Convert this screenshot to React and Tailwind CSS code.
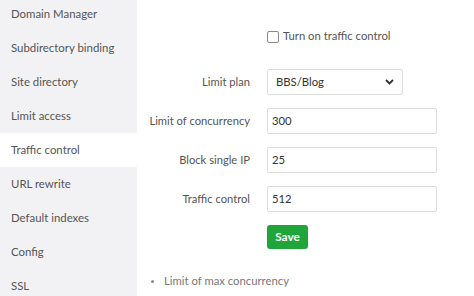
import React from "react";

const items = [
  "Domain Manager",
  "Subdirectory binding",
  "Site directory",
  "Limit access",
  "Traffic control",
  "URL rewrite",
  "Default indexes",
  "Config",
  "SSL",
];

function Row({ label, children }) {
  return (
    <div className="flex items-center h-[26px]">
      <div className="w-[130px] shrink-0 pr-[17px] text-right text-[11.2px] text-[#555] whitespace-nowrap">{label}</div>
      {children}
    </div>
  );
}

export default function App() {
  return (
    <div
      className="flex w-[474px] h-[296px] overflow-hidden bg-white"
      style={{ fontFamily: 'Lato, "Noto Sans", sans-serif' }}
    >
      <div className="w-[137px] shrink-0 bg-[#f2f2f4] -mt-[3px] flex flex-col">
        {items.map((t) => (
          <div
            key={t}
            className={
              "h-[34px] shrink-0 flex items-center pl-[11px] text-[11.4px] text-[#555] " +
              (t === "Traffic control" ? "bg-white" : "")
            }
          >
            {t}
          </div>
        ))}
      </div>
      <div className="flex-1 flex flex-col pt-[30px]">
        <div className="flex items-center h-[13px] pl-[130px]">
          <span className="w-[12px] h-[12px] border border-[#888] rounded-[2px] bg-white mr-[4px]" />
          <span className="text-[11.3px] text-[#555]">Turn on traffic control</span>
        </div>
        <div className="flex flex-col gap-[13px] mt-[26px]">
          <Row label="Limit plan">
            <div className="w-[136px] h-[26px] border border-[#ddd] rounded-[2px] flex items-center justify-between px-[8px] text-[11.3px] text-[#333]">
              <span>BBS/Blog</span>
              <svg width="9" height="6" viewBox="0 0 9 6">
                <path d="M1 1 L4.5 4.5 L8 1" fill="none" stroke="#333" strokeWidth="1.8" />
              </svg>
            </div>
          </Row>
          <Row label="Limit of concurrency">
            <div className="w-[170px] h-[26px] border border-[#ddd] rounded-[2px] flex items-center px-[4px] text-[11.3px] text-[#333]">300</div>
          </Row>
          <Row label="Block single IP">
            <div className="w-[170px] h-[26px] border border-[#ddd] rounded-[2px] flex items-center px-[4px] text-[11.3px] text-[#333]">25</div>
          </Row>
          <Row label="Traffic control">
            <div className="w-[170px] h-[26px] border border-[#ddd] rounded-[2px] flex items-center px-[4px] text-[11.3px] text-[#333]">512</div>
          </Row>
          <div className="pl-[130px] -mt-[2px]">
            <button className="w-[41px] h-[24px] bg-[#20a53a] rounded-[3px] text-white text-[11.8px] font-bold">Save</button>
          </div>
        </div>
        <div className="flex items-center mt-[24px] pl-[14px] text-[11.3px] text-[#777]">
          <span className="w-[3px] h-[3px] rounded-full bg-[#888] mr-[10px]" />
          <span>Limit of max concurrency</span>
        </div>
      </div>
    </div>
  );
}
